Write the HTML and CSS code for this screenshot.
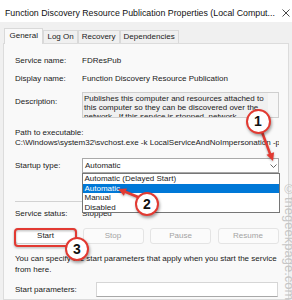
FILE: index.html
```html
<!DOCTYPE html>
<html>
<head>
<meta charset="utf-8">
<link rel="stylesheet" href="styles.css">
</head>
<body>
<div class="window">
  <div class="titlebar">
    <span class="title">Function Discovery Resource Publication Properties (Local Comput...</span>
    <svg class="close" viewBox="0 0 8 8"><path d="M0.5 0.5L7.5 7.5M7.5 0.5L0.5 7.5"/></svg>
  </div>
  <div class="tabs">
    <div class="tab active">General</div>
    <div class="tab">Log On</div>
    <div class="tab">Recovery</div>
    <div class="tab">Dependencies</div>
  </div>
  <div class="panel">
    <div class="row r-name"><span class="label">Service name:</span><span>FDResPub</span></div>
    <div class="row r-display"><span class="label">Display name:</span><span>Function Discovery Resource Publication</span></div>
    <div class="row r-desc">
      <span class="label desc-label">Description:</span>
      <div class="descbox">
        <div class="desctext">Publishes this computer and resources attached to<br>this computer so they can be discovered over the<br>network.&nbsp; If this service is stopped, network</div>
        <div class="scrolltrack"></div>
      </div>
    </div>
    <div class="pathlabel">Path to executable:</div>
    <div class="path">C:\Windows\system32\svchost.exe -k LocalServiceAndNoImpersonation -p</div>
    <div class="row r-startup">
      <span class="label">Startup type:</span>
      <div class="combo">
        <span>Automatic</span>
        <svg class="chev" viewBox="0 0 7 4"><path d="M0.5 0.5L3.5 3.5L6.5 0.5"/></svg>
        <div class="dropdown">
          <div class="opt">Automatic (Delayed Start)</div>
          <div class="opt selected">Automatic</div>
          <div class="opt">Manual</div>
          <div class="opt">Disabled</div>
        </div>
      </div>
    </div>
    <div class="sep"></div>
    <div class="row r-status"><span class="label">Service status:</span><span>Stopped</span></div>
    <div class="buttons">
      <div class="btn primary">Start</div>
      <div class="btn">Stop</div>
      <div class="btn">Pause</div>
      <div class="btn">Resume</div>
    </div>
    <p class="help">You can specify the start parameters that apply when you start the service<br>from here.</p>
    <div class="row r-params"><span class="label params-label">Start parameters:</span><div class="input"></div></div>
  </div>

  <div class="watermark">©thegeekpage.com</div>

  <svg class="annot" viewBox="0 0 292 300">
    <rect x="15" y="229" width="61" height="17" rx="3" ry="3" class="hl"/>
    <line x1="262" y1="132" x2="270.5" y2="155" class="ln"/>
    <polygon points="273,161 266.5,154.8 274.1,152.2" class="hd"/>
    <line x1="138" y1="197" x2="124.5" y2="191.5" class="ln"/>
    <polygon points="118,189 126.95,188.4 123.85,195.8" class="hd"/>
  </svg>

  <div class="badge b1">1</div>
  <div class="badge b2">2</div>
  <div class="badge b3">3</div>
</div>
</body>
</html>
```

FILE: styles.css
```css
* { box-sizing: border-box; }
html, body { margin: 0; padding: 0; }
body {
  width: 292px;
  height: 300px;
  overflow: hidden;
  background: #f0f0f0;
  font-family: "Liberation Sans", Arial, sans-serif;
  font-size: 8px;
  line-height: 10px;
  color: #1a1a1a;
}
.window { position: relative; width: 292px; height: 300px; overflow: hidden; }

.titlebar {
  height: 22px;
  background: #ffffff;
  display: flex;
  align-items: center;
  padding: 3px 2px 0 5px;
}
.title { flex: 1; font-size: 8.8px; white-space: nowrap; overflow: hidden; color: #111; }
.close { width: 8px; height: 8px; flex: none; margin-left: 4px; stroke: #333; stroke-width: 0.9; fill: none; }

.tabs {
  display: flex;
  align-items: flex-end;
  height: 15px;
  margin-top: 6px;
  padding-left: 4px;
  position: relative;
  z-index: 1;
}
.tab {
  height: 13px;
  line-height: 12px;
  padding: 0 3px;
  border: 1px solid #d9d9d9;
  border-bottom: none;
  background: #f0f0f0;
  white-space: nowrap;
}
.tab.active {
  height: 16px;
  margin-bottom: -1px;
  line-height: 13px;
  padding: 0 4.5px;
  background: #f9f9f9;
}

.panel {
  margin: 0 3px;
  height: 257px;
  border: 1px solid #dcdcdc;
  background: #f9f9f9;
  padding: 12px 0 0 11px;
}
.row { display: flex; align-items: center; }
.label { width: 67px; flex: none; white-space: nowrap; }
.r-display { margin-top: 8px; }
.r-desc { margin-top: 8px; align-items: flex-start; }
.desc-label { padding-top: 5px; }
.descbox {
  width: 197px;
  height: 26px;
  display: flex;
  background: #f0f0f0;
  border: 1px solid #cfcfcf;
  overflow: hidden;
}
.desctext { flex: 1; padding: 0.5px 0 0 1px; line-height: 9.4px; white-space: nowrap; overflow: hidden; }
.scrolltrack { width: 10px; flex: none; background: #f6f6f6; }

.pathlabel { margin-top: 10px; }
.path { width: 264px; white-space: nowrap; overflow: hidden; }

.r-startup { margin-top: 10px; }
.combo {
  position: relative;
  width: 197px;
  height: 15px;
  border: 1px solid #a9a9a9;
  background: #ffffff;
  display: flex;
  align-items: center;
  justify-content: space-between;
  padding: 0 1.5px 0 2px;
}
.chev { width: 7px; height: 4px; stroke: #555; stroke-width: 0.9; fill: none; }
.dropdown {
  position: absolute;
  top: 14px;
  left: -1px;
  width: 198px;
  height: 40px;
  border: 1px solid #767676;
  background: #ffffff;
  z-index: 2;
}
.opt { height: 9.5px; line-height: 9.5px; padding-left: 1.5px; white-space: nowrap; }
.opt.selected { background: #0078d7; color: #ffffff; }

.sep { margin-top: 28px; width: 264px; height: 1px; background: #d2d2d2; }
.r-status { margin-top: 7px; }

.buttons { margin-top: 9px; display: flex; gap: 6.5px; }
.btn {
  width: 61px;
  height: 16px;
  border: 1px solid #e4e4e4;
  border-radius: 3px;
  background: #fbfbfb;
  color: #a3a3a3;
  text-align: center;
  line-height: 14px;
}
.btn.primary { background: #ffffff; color: #1a1a1a; border-color: #d0d0d0; }

.help { margin: 8.5px 0 0; line-height: 11px; white-space: nowrap; }
.r-params { margin-top: 7.5px; }
.params-label { width: 81px; }
.input {
  width: 182px;
  height: 15px;
  background: #ffffff;
  border: 1px solid #d6d6d6;
  border-bottom-color: #a8a8a8;
}

.watermark {
  position: absolute;
  left: 281.5px;
  top: 182px;
  writing-mode: vertical-rl;
  font-size: 13px;
  line-height: 14px;
  color: #c6c6c6;
  white-space: nowrap;
}

.annot {
  position: absolute;
  left: 0;
  top: 0;
  width: 292px;
  height: 300px;
  z-index: 4;
  pointer-events: none;
  filter: drop-shadow(0.5px 1px 1px rgba(0,0,0,0.3));
}
.annot .hl { fill: none; stroke: #e23a32; stroke-width: 2; }
.annot .ln { stroke: #e23a32; stroke-width: 2.5; stroke-linecap: round; }
.annot .hd { fill: #e23a32; }

.badge {
  position: absolute;
  z-index: 5;
  width: 25px;
  height: 25px;
  border: 2.5px solid #e23a32;
  border-radius: 50%;
  background: #ffffff;
  display: flex;
  align-items: center;
  justify-content: center;
  font-family: "Liberation Sans", Arial, sans-serif;
  font-weight: bold;
  font-size: 14px;
  line-height: 14px;
  color: #111111;
  box-shadow: 1px 2px 3px rgba(0,0,0,0.35);
}
.b1 { left: 245.5px; top: 108.5px; }
.b2 { left: 135px; top: 191.5px; width: 24px; height: 24px; }
.b3 { left: 65px; top: 237px; width: 24px; height: 24px; }
```
